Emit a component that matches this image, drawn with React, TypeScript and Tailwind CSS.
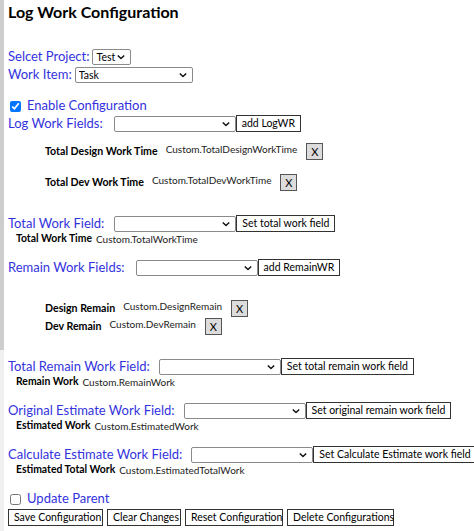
import { useState } from "react";

const font = { fontFamily: 'Lato, "Noto Sans", "Liberation Sans", sans-serif' };

function Chevron() {
  return (
    <svg viewBox="0 0 10 6" className="pointer-events-none absolute right-[6px] top-1/2 h-[5px] w-[8px] -translate-y-1/2">
      <path d="M1 1 L5 5 L9 1" fill="none" stroke="#111" strokeWidth="1.8" />
    </svg>
  );
}

function Select({ width, value, options = [] }: { width: string; value?: string; options?: string[] }) {
  return (
    <div className={`relative h-[16px] shrink-0 ${width}`}>
      <select
        defaultValue={value}
        className="block h-full w-full appearance-none rounded-[2px] border border-[#8a8a8a] bg-white pl-[3px] pr-[14px] text-[10.5px] leading-[14px] text-black"
      >
        {options.map((o) => (
          <option key={o}>{o}</option>
        ))}
      </select>
      <Chevron />
    </div>
  );
}

function Btn({ children, width = "" }: { children: React.ReactNode; width?: string }) {
  return (
    <button className={`h-[17px] shrink-0 whitespace-nowrap border border-[#333] bg-white px-[5px] text-center text-[10.5px] leading-[15px] text-black ${width}`}>
      {children}
    </button>
  );
}

function XBtn() {
  return (
    <button className="block h-[17px] w-[17px] border border-[#555] bg-[#dcdcdc] text-[11px] leading-[15px] text-black">X</button>
  );
}

function FieldRow({ label, gap, button, className = "" }: { label: string; gap: string; button: string; className?: string }) {
  return (
    <div className={`flex h-[17px] items-center whitespace-nowrap ${className}`}>
      <span className={`text-[13px] text-[#3333dd] ${gap}`}>{label}</span>
      <Select width="w-[122px]" />
      <Btn>{button}</Btn>
    </div>
  );
}

function MappedField({ label, value, className = "" }: { label: string; value: string; className?: string }) {
  return (
    <div className={`flex h-[18px] items-center whitespace-nowrap pl-[37px] ${className}`}>
      <span className="mt-[2px] text-[10.6px] font-bold text-black">{label}</span>
      <span className="mb-[3px] ml-[8px] text-[10px] text-[#222]">{value}</span>
      <span className="ml-[9px]">
        <XBtn />
      </span>
    </div>
  );
}

function ResultLine({ label, value }: { label: string; value: string }) {
  return (
    <div className="flex h-[14px] items-center whitespace-nowrap pl-[8px]">
      <span className="text-[10.4px] font-bold text-black">{label}</span>
      <span className="ml-[4px] text-[10px] text-[#222]">{value}</span>
    </div>
  );
}

export default function App() {
  const [enabled, setEnabled] = useState(true);
  const [updateParent, setUpdateParent] = useState(false);

  return (
    <div className="flex min-h-[531px] bg-white" style={font}>
      <div className="flex w-[4px] shrink-0 flex-col bg-[#f0f0f0]">
        <div className="h-[350px] bg-[#cdcdcd]" />
      </div>

      <div className="flex-1 pl-[4px]">
        <h1 className="h-[24px] whitespace-nowrap text-[16px] font-bold leading-[24px] text-black">Log Work Configuration</h1>

        <div className="mt-[24px] flex h-[18px] items-center">
          <span className="mr-[3px] text-[13px] text-[#3333dd]">Selcet Project:</span>
          <Select width="w-[39px]" value="Test" options={["Test"]} />
        </div>
        <div className="flex h-[18px] items-center">
          <span className="mr-[3px] text-[13px] text-[#3333dd]">Work Item:</span>
          <Select width="w-[118px]" value="Task" options={["Task"]} />
        </div>

        <label className="mt-[13px] flex h-[18px] items-center">
          <input
            type="checkbox"
            checked={enabled}
            onChange={(e) => setEnabled(e.target.checked)}
            className="ml-[2px] mr-[6px] h-[11px] w-[11px] accent-[#0075ff]"
          />
          <span className="text-[13px] text-[#3333dd]">Enable Configuration</span>
        </label>

        <FieldRow label="Log Work Fields:" gap="mr-[11px]" button="add LogWR" />
        <MappedField className="mt-[10px]" label="Total Design Work Time" value="Custom.TotalDesignWorkTime" />
        <MappedField className="mt-[13px]" label="Total Dev Work Time" value="Custom.TotalDevWorkTime" />

        <FieldRow className="mt-[24px]" label="Total Work Field:" gap="mr-[10px]" button="Set total work field" />
        <ResultLine label="Total Work Time" value="Custom.TotalWorkTime" />

        <FieldRow className="mt-[13px]" label="Remain Work Fields:" gap="mr-[11px]" button="add RemainWR" />
        <MappedField className="mt-[23px]" label="Design Remain" value="Custom.DesignRemain" />
        <MappedField label="Dev Remain" value="Custom.DevRemain" />

        <FieldRow className="mt-[23px]" label="Total Remain Work Field:" gap="mr-[9px]" button="Set total remain work field" />
        <ResultLine label="Remain Work" value="Custom.RemainWork" />

        <FieldRow className="mt-[13px]" label="Original Estimate Work Field:" gap="mr-[9px]" button="Set original remain work field" />
        <ResultLine label="Estimated Work" value="Custom.EstimatedWork" />

        <FieldRow className="mt-[13px]" label="Calculate Estimate Work Field:" gap="mr-[9px]" button="Set Calculate Estimate work field" />
        <ResultLine label="Estimated Total Work" value="Custom.EstimatedTotalWork" />

        <label className="mt-[13px] flex h-[18px] items-center">
          <input
            type="checkbox"
            checked={updateParent}
            onChange={(e) => setUpdateParent(e.target.checked)}
            className="ml-[2px] mr-[6px] h-[11px] w-[11px]"
          />
          <span className="text-[13px] text-[#3333dd]">Update Parent</span>
        </label>

        <div className="mt-[1px] flex gap-[4px]">
          <Btn width="w-[95px] px-0">Save Configuration</Btn>
          <Btn width="w-[74px] px-0">Clear Changes</Btn>
          <Btn width="w-[98px] px-0">Reset Configuration</Btn>
          <Btn width="w-[107px] px-0">Delete Configurations</Btn>
        </div>
      </div>
    </div>
  );
}
